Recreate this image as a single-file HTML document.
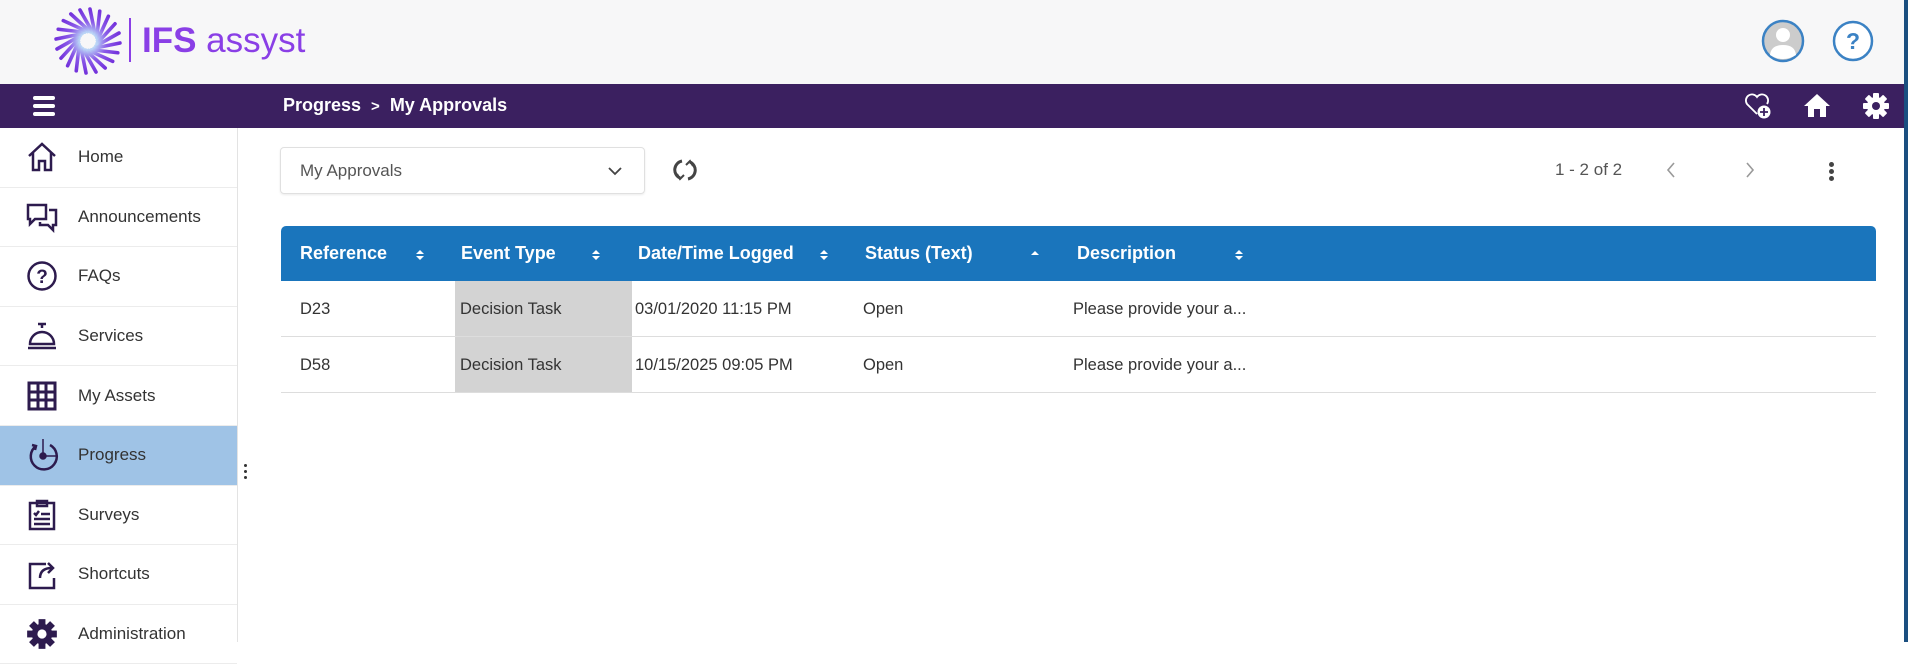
<!DOCTYPE html>
<html><head><meta charset="utf-8"><style>
*{box-sizing:border-box;margin:0;padding:0}
body{width:1908px;height:642px;overflow:hidden;background:#fff;font-family:"Liberation Sans",sans-serif;position:relative;color:#333}
.top{position:absolute;left:0;top:0;width:1904px;height:84px;background:#f7f7f8}
.nav{position:absolute;left:0;top:84px;width:1904px;height:44px;background:#3b2060}
.rbar{position:absolute;right:0;top:0;width:4px;height:642px;background:#1b4f80}
.side{position:absolute;left:0;top:128px;width:238px;height:514px;border-right:1px solid #e3e3e3;background:#fff}
.item{height:59.6px;border-bottom:1px solid #ececec;position:relative;font-size:17px;color:#333}
.item span{position:absolute;left:78px;top:50%;transform:translateY(-50%)}
.item svg{position:absolute;left:26px;top:50%;transform:translateY(-50%)}
.item.act{background:#9fc3e6}
.abs{position:absolute}
.th{position:absolute;top:0;height:55px;line-height:55px;color:#fff;font-weight:bold;font-size:18px}
.td{position:absolute;font-size:16.5px;color:#333;line-height:56px}
.srt{position:absolute;top:24px;width:8px;height:10px}
</style></head><body>
<div class="top"></div>
<svg class="abs" style="left:50px;top:5px" width="76" height="72" viewBox="-38 -36 76 72">
<defs><linearGradient id="g" x1="0" y1="0" x2="1" y2="0"><stop offset="0" stop-color="#b9d4f6"/><stop offset="0.5" stop-color="#8a5ae8"/><stop offset="1" stop-color="#7433dc"/></linearGradient></defs>
<g stroke-linecap="round" stroke="url(#g)" stroke-width="3.6">
<line x1="8" y1="5" x2="31" y2="-8" transform="rotate(0)"/>
<line x1="8" y1="5" x2="31" y2="-8" transform="rotate(18)"/>
<line x1="8" y1="5" x2="31" y2="-8" transform="rotate(36)"/>
<line x1="8" y1="5" x2="31" y2="-8" transform="rotate(54)"/>
<line x1="8" y1="5" x2="31" y2="-8" transform="rotate(72)"/>
<line x1="8" y1="5" x2="31" y2="-8" transform="rotate(90)"/>
<line x1="8" y1="5" x2="31" y2="-8" transform="rotate(108)"/>
<line x1="8" y1="5" x2="31" y2="-8" transform="rotate(126)"/>
<line x1="8" y1="5" x2="31" y2="-8" transform="rotate(144)"/>
<line x1="8" y1="5" x2="31" y2="-8" transform="rotate(162)"/>
<line x1="8" y1="5" x2="31" y2="-8" transform="rotate(180)"/>
<line x1="8" y1="5" x2="31" y2="-8" transform="rotate(198)"/>
<line x1="8" y1="5" x2="31" y2="-8" transform="rotate(216)"/>
<line x1="8" y1="5" x2="31" y2="-8" transform="rotate(234)"/>
<line x1="8" y1="5" x2="31" y2="-8" transform="rotate(252)"/>
<line x1="8" y1="5" x2="31" y2="-8" transform="rotate(270)"/>
<line x1="8" y1="5" x2="31" y2="-8" transform="rotate(288)"/>
<line x1="8" y1="5" x2="31" y2="-8" transform="rotate(306)"/>
<line x1="8" y1="5" x2="31" y2="-8" transform="rotate(324)"/>
<line x1="8" y1="5" x2="31" y2="-8" transform="rotate(342)"/>
</g></svg>
<div class="abs" style="left:129px;top:18px;width:2px;height:44px;background:#8a3fe6"></div>
<div class="abs" style="left:142px;top:19px;font-size:35px;color:#8a3fe6;line-height:44px"><b>IFS</b> assyst</div>
<svg class="abs" style="left:1761px;top:19px" width="44" height="44" viewBox="0 0 44 44"><circle cx="22" cy="22" r="20" fill="#ccc" stroke="#3b82c4" stroke-width="2.5"/><circle cx="22" cy="16" r="7" fill="#fff"/><path d="M9 36 Q10 26 22 26 Q34 26 35 36 Q22 44 9 36Z" fill="#fff"/></svg>
<svg class="abs" style="left:1832px;top:20px" width="42" height="42" viewBox="0 0 42 42"><circle cx="21" cy="21" r="19" fill="#fff" stroke="#3b82c4" stroke-width="2.5"/><text x="21" y="29" text-anchor="middle" font-family="Liberation Sans" font-weight="bold" font-size="23" fill="#3b82c4">?</text></svg>
<div class="nav"></div>
<div class="abs" style="left:33px;top:96px;width:22px;height:4px;background:#fff;border-radius:2px;box-shadow:0 8px 0 #fff,0 16px 0 #fff"></div>
<div class="abs" style="left:283px;top:95px;color:#fff;font-weight:bold;font-size:18px">Progress &nbsp;<span style="font-size:15px">&gt;</span>&nbsp; My Approvals</div>
<svg class="abs" style="left:1744px;top:92px" width="30" height="28" viewBox="0 0 30 28"><path d="M13 22 L3 12 A5.5 5.5 0 0 1 13 5 A5.5 5.5 0 0 1 23 12" fill="none" stroke="#fff" stroke-width="1.8"/><circle cx="20" cy="20" r="6.5" fill="#fff"/><path d="M20 16v8M16 20h8" stroke="#3b2060" stroke-width="1.8"/></svg>
<svg class="abs" style="left:1803px;top:92px" width="28" height="26" viewBox="0 0 28 26"><path d="M14 2 L27 14 H23 V25 H17 V17 H11 V25 H5 V14 H1Z" fill="#fff"/></svg>
<svg class="abs" style="left:1862px;top:92px" width="28" height="28" viewBox="0 0 28 28"><g fill="#fff"><circle cx="14" cy="14" r="9"/><rect x="11" y="1" width="6" height="26" rx="1"/><rect x="11" y="1" width="6" height="26" rx="1" transform="rotate(45 14 14)"/><rect x="11" y="1" width="6" height="26" rx="1" transform="rotate(90 14 14)"/><rect x="11" y="1" width="6" height="26" rx="1" transform="rotate(135 14 14)"/></g><circle cx="14" cy="14" r="4" fill="#3b2060"/></svg>
<div class="rbar"></div>
<div class="side">
<div class="item"><svg width="32" height="32" viewBox="0 0 32 32" fill="none" stroke="#2d1b4e" stroke-width="2.5"><path d="M3 15 L16 3 L29 15 M7 12 V29 H13 V20 H19 V29 H25 V12"/></svg><span>Home</span></div>
<div class="item"><svg width="32" height="32" viewBox="0 0 32 32" fill="none" stroke="#2d1b4e" stroke-width="2.5"><path d="M2 4 H20 V18 H9 L4 23 V18 H2Z M23 9 H30 V24 H27 V29 L22 24 H14 V21"/></svg><span>Announcements</span></div>
<div class="item"><svg width="32" height="32" viewBox="0 0 32 32"><circle cx="16" cy="16" r="13.5" fill="none" stroke="#2d1b4e" stroke-width="2.5"/><text x="16" y="23" text-anchor="middle" font-size="19" font-weight="bold" fill="#2d1b4e" font-family="Liberation Sans">?</text></svg><span>FAQs</span></div>
<div class="item"><svg width="32" height="32" viewBox="0 0 32 32" fill="none" stroke="#2d1b4e" stroke-width="2.5"><path d="M12 4 H20 M16 4 V8 M4 24 A12 12 0 0 1 28 24Z M2 28 H30"/></svg><span>Services</span></div>
<div class="item"><svg width="32" height="32" viewBox="0 0 32 32" fill="none" stroke="#2d1b4e" stroke-width="3"><rect x="3" y="3" width="26" height="26"/><path d="M12 3V29M20 3V29M3 12H29M3 20H29"/></svg><span>My Assets</span></div>
<div class="item act"><svg width="36" height="36" viewBox="0 0 36 36" fill="none" stroke="#2d1b4e" stroke-width="2.5"><path d="M10 9 A13 13 0 1 0 24 8" /><path d="M6 8 L10 9 L9 13"/><path d="M17 2 V19 H32" stroke-width="1.5"/><circle cx="17" cy="19" r="2.5" fill="#2d1b4e"/></svg><span>Progress</span></div>
<div class="item"><svg width="32" height="32" viewBox="0 0 32 32" fill="none" stroke="#2d1b4e" stroke-width="2.5"><path d="M4 4 H28 V30 H4Z M11 2 H21 V7 H11Z M8 14 l2 2 l3-4 M15 15 H24 M8 20 H24 M8 25 H24"/></svg><span>Surveys</span></div>
<div class="item"><svg width="32" height="32" viewBox="0 0 32 32" fill="none" stroke="#2d1b4e" stroke-width="2.5"><path d="M20 6 H4 V30 H28 V20 M14 20 Q14 10 26 10 M22 5 L27 10 L22 15"/></svg><span>Shortcuts</span></div>
<div class="item"><svg width="32" height="32" viewBox="0 0 28 28"><g fill="#2d1b4e"><circle cx="14" cy="14" r="9"/><rect x="11" y="1" width="6" height="26"/><rect x="11" y="1" width="6" height="26" transform="rotate(45 14 14)"/><rect x="11" y="1" width="6" height="26" transform="rotate(90 14 14)"/><rect x="11" y="1" width="6" height="26" transform="rotate(135 14 14)"/></g><circle cx="14" cy="14" r="4" fill="#fff"/></svg><span>Administration</span></div>
</div>
<div class="abs" style="left:244px;top:464px;width:3px;height:3px;background:#333;border-radius:50%;box-shadow:0 6px 0 #333,0 12px 0 #333"></div>
<div class="abs" style="left:280px;top:147px;width:365px;height:47px;border:1px solid #e0e0e0;border-radius:4px;box-shadow:0 1px 2px rgba(0,0,0,.08)"><span class="abs" style="left:19px;top:13px;font-size:17px;color:#555">My Approvals</span><svg class="abs" style="left:326px;top:18px" width="16" height="10" viewBox="0 0 16 10"><path d="M2 2 L8 8 L14 2" fill="none" stroke="#444" stroke-width="1.8"/></svg></div>
<svg class="abs" style="left:673px;top:157px" width="24" height="26" viewBox="0 0 24 26" fill="none" stroke="#444" stroke-width="3"><path d="M9 4 A9 9 0 0 0 7 21 M15 22 A9 9 0 0 0 17 5"/><path d="M4 17 L7 22 L11 18 M20 9 L17 4 L13 8" stroke-width="2"/></svg>
<div class="abs" style="left:1555px;top:160px;font-size:17px;color:#555">1 - 2 of 2</div>
<svg class="abs" style="left:1665px;top:161px" width="12" height="18" viewBox="0 0 12 18"><path d="M9 2 L3 9 L9 16" fill="none" stroke="#999" stroke-width="1.6"/></svg>
<svg class="abs" style="left:1744px;top:161px" width="12" height="18" viewBox="0 0 12 18"><path d="M3 2 L9 9 L3 16" fill="none" stroke="#999" stroke-width="1.6"/></svg>
<div class="abs" style="left:1829px;top:162px;width:5px;height:5px;background:#444;border-radius:50%;box-shadow:0 7px 0 #444,0 14px 0 #444"></div>
<div class="abs" style="left:281px;top:226px;width:1595px;height:55px;background:#1a75bc;border-radius:5px 5px 0 0">
<div class="th" style="left:19px">Reference</div>
<div class="th" style="left:180px">Event Type</div>
<div class="th" style="left:357px">Date/Time Logged</div>
<div class="th" style="left:584px">Status (Text)</div>
<div class="th" style="left:796px">Description</div>
<svg class="srt" style="left:135px" viewBox="0 0 8 10"><path d="M4 0L8 4H0ZM4 10L8 6H0Z" fill="#fff"/></svg>
<svg class="srt" style="left:311px" viewBox="0 0 8 10"><path d="M4 0L8 4H0ZM4 10L8 6H0Z" fill="#fff"/></svg>
<svg class="srt" style="left:539px" viewBox="0 0 8 10"><path d="M4 0L8 4H0ZM4 10L8 6H0Z" fill="#fff"/></svg>
<svg class="srt" style="left:750px" viewBox="0 0 8 10"><path d="M4 1L8 5H0Z" fill="#fff"/></svg>
<svg class="srt" style="left:954px" viewBox="0 0 8 10"><path d="M4 0L8 4H0ZM4 10L8 6H0Z" fill="#fff"/></svg>
</div>
<div class="abs" style="left:455px;top:281px;width:177px;height:112px;background:#d3d3d3"></div>
<div class="abs" style="left:281px;top:336px;width:1595px;height:1px;background:#ddd"></div>
<div class="abs" style="left:281px;top:392px;width:1595px;height:1px;background:#ddd"></div>
<div class="td" style="left:300px;top:281px">D23</div>
<div class="td" style="left:460px;top:281px">Decision Task</div>
<div class="td" style="left:635px;top:281px">03/01/2020 11:15 PM</div>
<div class="td" style="left:863px;top:281px">Open</div>
<div class="td" style="left:1073px;top:281px">Please provide your a...</div>
<div class="td" style="left:300px;top:337px">D58</div>
<div class="td" style="left:460px;top:337px">Decision Task</div>
<div class="td" style="left:635px;top:337px">10/15/2025 09:05 PM</div>
<div class="td" style="left:863px;top:337px">Open</div>
<div class="td" style="left:1073px;top:337px">Please provide your a...</div>
</body></html>
